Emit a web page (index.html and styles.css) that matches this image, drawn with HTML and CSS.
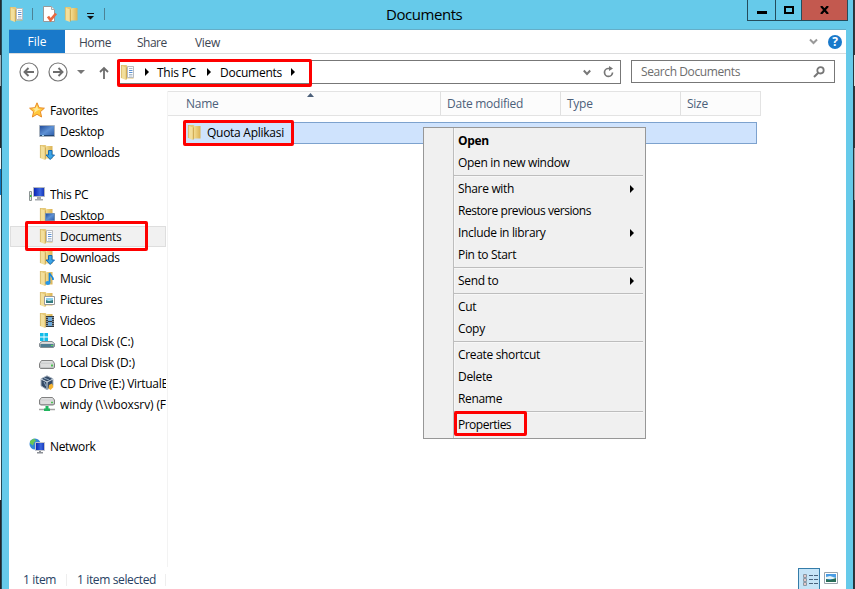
FILE: index.html
```
<!DOCTYPE html>
<html lang="en">
<head>
<meta charset="utf-8">
<title>Documents</title>
<link rel="stylesheet" href="styles.css">
</head>
<body>
<svg class="defs" width="0" height="0">
  <defs>
    <linearGradient id="gold" x1="0" x2="1"><stop offset="0" stop-color="#f3dc90"/><stop offset="1" stop-color="#dab253"/></linearGradient>
    <linearGradient id="screen" x1="0" y1="0" x2="1" y2="1"><stop offset="0" stop-color="#1d4695"/><stop offset=".5" stop-color="#5e91d4"/><stop offset="1" stop-color="#2959a6"/></linearGradient>
    <linearGradient id="pc" x1="0" x2="1"><stop offset="0" stop-color="#0820b0"/><stop offset=".6" stop-color="#3c68e0"/><stop offset="1" stop-color="#1230b4"/></linearGradient>
    <linearGradient id="metal" x1="0" y1="0" x2="0" y2="1"><stop offset="0" stop-color="#e8e8e8"/><stop offset="1" stop-color="#a3a5a8"/></linearGradient>
    <symbol id="folder" viewBox="0 0 16 16">
      <path d="M1 1h5.500l1 1v12.500L1 14z" fill="#e5c878"/>
      <path d="M7 3l1-1h5.500v12.500H7z" fill="url(#gold)"/>
      <path d="M1 1.500l5 2V16l-5-2z" fill="#f3df9b"/><path d="M6.300 3.500V15.500" stroke="#c9a249" stroke-width=".9"/><path d="M1.400 1v13" stroke="#d3b663" stroke-width=".8"/>
    </symbol>
    <symbol id="documents" viewBox="0 0 16 16">
      <use href="#folder"/><path d="M7.500 2.500h6v11h-6z" fill="#fff" stroke="#b9bcc0"/>
      <path d="M9 4.500h3.500M9 10.500h3.500M9 12h3.500" stroke="#a4b4c6" stroke-width=".9"/><path d="M9 6.500h3.500M9 8.500h3.500" stroke="#5d92d3"/>
    </symbol>
    <symbol id="downloads" viewBox="0 0 16 16">
      <use href="#folder"/><path d="M9.500 6.500h3.500V11h2.500l-4.300 4.500L7 11h2.500z" fill="#3aa4e6" stroke="#1769b0"/>
    </symbol>
    <symbol id="music" viewBox="0 0 16 16">
      <use href="#folder"/><path d="M10.500 13V3c.5 3 4 3 3.500 7" fill="none" stroke="#1787dc" stroke-width="1.700"/><ellipse cx="8.800" cy="13" rx="2.500" ry="1.900" fill="#2697e8"/>
    </symbol>
    <symbol id="pictures" viewBox="0 0 16 16">
      <use href="#folder"/><path d="M5.500 5.500h10v8h-10z" fill="#fff" stroke="#9a9a9a"/><path d="M7 7h7v2.500H7z" fill="#8bd0ec"/><path d="M7 9l3 1 4-1v3H7z" fill="#337c80"/>
    </symbol>
    <symbol id="videos" viewBox="0 0 16 16">
      <use href="#folder"/><path d="M7 4h8v11H7z" fill="#303940"/><path d="M9 5h4v4H9zM9 10h4v4H9z" fill="#6ca9db"/><path d="M8 5v9M14 5v9" stroke="#ddd" stroke-dasharray="1 1"/>
    </symbol>
    <symbol id="monitor" viewBox="0 0 16 16">
      <path d="M.5 2.500h15v11H.5z" fill="url(#screen)" stroke="#aab3be"/><path d="M1 12.500h14" stroke="#214776"/><path d="M3 12.500h2" stroke="#9bd1ef"/>
    </symbol>
    <symbol id="folderdesk" viewBox="0 0 16 16">
      <use href="#folder"/><path d="M6.500 6.500h9v7h-9z" fill="url(#screen)" stroke="#718eae"/>
    </symbol>
    <symbol id="star" viewBox="0 0 16 16">
      <path d="M8 .8l2.100 4.900 5.300.5-4 3.500 1.200 5.300L8 12.300 3.400 15l1.200-5.300-4-3.500 5.300-.5z" fill="#ffc83c" stroke="#ea8c28"/><path d="M8 3.500l1 3.200 3 .4-3.500 1.500L5 11l1-3-2.500-1.500 3-.3z" fill="#ffe997"/>
    </symbol>
    <symbol id="thispc" viewBox="0 0 16 16">
      <path d="M.5 5.500h2v9h-2z" fill="#e6e8e8" stroke="#8c9494"/><path d="M1 9h1.500v2H1z" fill="#45bd40"/>
      <path d="M4.500 1.500h11v9h-11z" fill="url(#pc)" stroke="#b4b8bf"/><path d="M8 11h4v2h2v1.500H6V13h2z" fill="#a5a9ad"/>
    </symbol>
    <symbol id="drive" viewBox="0 0 16 16">
      <path d="M2.500 6.500h11l2 3v4l-1 1h-13l-1-1v-4z" fill="url(#metal)" stroke="#808080"/><path d="M1.500 10h13v3.500h-13z" fill="#dcdcdc"/><path d="M12 11.500h2" stroke="#4cc252" stroke-width="1.800"/>
    </symbol>
    <symbol id="driveC" viewBox="0 0 16 16">
      <path d="M3 8.500h10l2.500 2v3l-1 1h-13l-1-1v-3z" fill="url(#metal)" stroke="#858d92"/><path d="M1.500 11h13v3h-13z" fill="#4e7c91"/><path d="M12 12.500h2" stroke="#5ed85a"/>
      <path d="M1 0h3.600v3.600H1zM5.400 0H9v3.600H5.400zM1 4.400h3.600V8H1zM5.400 4.400H9V8H5.400z" fill="#12bce9"/>
    </symbol>
    <symbol id="cd" viewBox="0 0 16 16">
      <path d="M8 .8l6 3v7l-6 4-6-4v-7z" fill="#354b67" stroke="#aab5c2"/><path d="M2 4l6 3 6-3M8 7v7" stroke="#d9e3ec" fill="none"/><path d="M5 7l2 4M5 3l5 2" stroke="#8fa9c3"/><path d="M10 10l3-1.500 1.500 3.500-3 3-2-1.500z" fill="#f6b431"/>
    </symbol>
    <symbol id="netdrive" viewBox="0 0 16 16">
      <path d="M2.500 1.500h11l2 2.500v4l-1 1h-13l-1-1V4z" fill="url(#metal)" stroke="#808080"/><path d="M1.500 4.500h13v3.500h-13z" fill="#dcdcdc"/><path d="M12 6.500h2" stroke="#4cc252" stroke-width="1.500"/><path d="M0 13.500h16" stroke="#a5a5a5" stroke-width="1.500"/><path d="M6.500 10h3v2.500H11V15H5v-2.500h1.500z" fill="#20b55e"/>
    </symbol>
    <symbol id="network" viewBox="0 0 16 16">
      <circle cx="6" cy="6" r="5.500" fill="#3487d8"/><path d="M1 3l4-2.500 2 2-2 2-1 3-3-2zM6 6l3-1v5H6z" fill="#69c755"/>
      <path d="M6.500 4.500h9v8h-9z" fill="url(#pc)" stroke="#c2c5cb"/><path d="M10 13h2v1h2v1.500H8V14h2z" fill="#8c9096"/>
    </symbol>
  </defs>
</svg>
<div class="desktop">
  <div class="edge left"></div>
  <div class="window">
    <header class="titlebar">
      <div class="quick">
        <svg class="i16"><use href="#documents"/></svg><i class="bar"></i>
        <svg class="i16 check" viewBox="0 0 16 16"><path d="M1.500 .5h8l3 3v12h-11z" fill="#fff" stroke="#999"/><path d="M9.500.5v3h3" fill="#eee" stroke="#aaa"/><path d="M6 10.500l2.500 3.500L14 7.500" fill="none" stroke="#e7683f" stroke-width="2.700"/></svg>
        <svg class="i16 newf"><use href="#folder"/></svg>
        <svg class="qa" width="7" height="7" viewBox="0 0 7 7"><path d="M0 .5h7" stroke="#111"/><path d="M0 3h7L3.500 6.500z" fill="#111"/></svg><i class="bar last"></i>
      </div>
      <h1>Documents</h1>
      <div class="controls">
        <span class="min"><svg width="10" height="3"><path d="M0 1.500h10" stroke="#000" stroke-width="3"/></svg></span>
        <span class="max"><svg width="10" height="8"><path d="M1 1h8v6H1z" fill="none" stroke="#000" stroke-width="2"/></svg></span>
        <span class="close"><svg width="9" height="8" viewBox="0 0 9 8"><path d="M1 0l7 8M8 0L1 8" stroke="#000" stroke-width="2.200"/></svg></span>
      </div>
    </header>
    <main class="content">
      <nav class="tabs">
        <span class="file">File</span><span class="tab home">Home</span><span class="tab share">Share</span><span class="tab view">View</span>
        <svg class="chev" width="9" height="7" viewBox="0 0 9 7"><path d="M1 1.500l3.500 3.500L8 1.500" fill="none" stroke="#999" stroke-width="2"/></svg>
        <span class="help">?</span>
      </nav>
      <div class="location">
        <svg class="round" width="20" height="20" viewBox="0 0 20 20"><circle cx="10" cy="10" r="9" fill="#fff" stroke="#777" stroke-width="1.200"/><path d="M15 10H6M9.500 6L5.500 10l4 4" fill="none" stroke="#6d6d6d" stroke-width="1.900"/></svg>
        <svg class="round fwd" width="20" height="20" viewBox="0 0 20 20"><circle cx="10" cy="10" r="9" fill="#fff" stroke="#777" stroke-width="1.200"/><path d="M5 10h9M10.500 6l4 4-4 4" fill="none" stroke="#6d6d6d" stroke-width="1.900"/></svg>
        <svg class="recent" width="8" height="4"><path d="M0 0h8L4 4z" fill="#777"/></svg>
        <svg class="up" width="10" height="13" viewBox="0 0 10 13"><path d="M5 13V2M1 6l4-4 4 4" fill="none" stroke="#6d6d6d" stroke-width="1.800"/></svg>
        <div class="address">
          <svg class="i16"><use href="#documents"/></svg>
          <svg class="tri first" viewBox="0 0 4 8"><path d="M0 0l4 4-4 4z"/></svg><span class="t-pc">This PC</span>
          <svg class="tri" viewBox="0 0 4 8"><path d="M0 0l4 4-4 4z"/></svg><span class="t-docs">Documents</span>
          <svg class="tri" viewBox="0 0 4 8"><path d="M0 0l4 4-4 4z"/></svg>
          <svg class="drop" width="8" height="7" viewBox="0 0 8 7"><path d="M.8 1.500L4 5l3.200-3.500" fill="none" stroke="#777" stroke-width="2"/></svg>
          <svg class="refresh" width="11" height="12" viewBox="0 0 11 12"><path d="M7 2.500H5A4 4 0 1 0 9.500 6.500" fill="none" stroke="#777" stroke-width="1.700"/><path d="M6 0v5l4-2.500z" fill="#777"/></svg>
          <i class="mark"></i>
        </div>
        <div class="search"><span>Search Documents</span><svg width="12" height="12" viewBox="0 0 12 12"><circle cx="7.500" cy="4.300" r="3.200" fill="none" stroke="#777" stroke-width="1.800"/><path d="M5.300 6.700L1 11" stroke="#777" stroke-width="2"/></svg></div>
      </div>
      <div class="panes">
        <aside class="tree">
          <div class="node root"><svg class="i16"><use href="#star"/></svg><span>Favorites</span></div>
          <div class="node"><svg class="i16"><use href="#monitor"/></svg><span>Desktop</span></div>
          <div class="node"><svg class="i16"><use href="#downloads"/></svg><span>Downloads</span></div>
          <div class="node root gap"><svg class="i16"><use href="#thispc"/></svg><span>This PC</span></div>
          <div class="node"><svg class="i16"><use href="#folderdesk"/></svg><span>Desktop</span></div>
          <div class="node selected"><svg class="i16"><use href="#documents"/></svg><span>Documents</span><i class="mark"></i></div>
          <div class="node"><svg class="i16"><use href="#downloads"/></svg><span>Downloads</span></div>
          <div class="node"><svg class="i16"><use href="#music"/></svg><span>Music</span></div>
          <div class="node"><svg class="i16"><use href="#pictures"/></svg><span>Pictures</span></div>
          <div class="node"><svg class="i16"><use href="#videos"/></svg><span>Videos</span></div>
          <div class="node"><svg class="i16"><use href="#driveC"/></svg><span class="wide">Local Disk (C:)</span></div>
          <div class="node"><svg class="i16"><use href="#drive"/></svg><span class="wide">Local Disk (D:)</span></div>
          <div class="node"><svg class="i16"><use href="#cd"/></svg><span>CD Drive (E:) VirtualB</span></div>
          <div class="node"><svg class="i16"><use href="#netdrive"/></svg><span class="share-name">windy (\\vboxsrv) (F</span></div>
          <div class="node root gap"><svg class="i16"><use href="#network"/></svg><span>Network</span></div>
        </aside>
        <section class="files">
          <div class="columns"><span class="name">Name<svg class="sort" width="7" height="4"><path d="M3.500 0L7 4H0z" fill="#4c607a"/></svg></span><span>Date modified</span><span>Type</span><span>Size</span></div>
          <div class="row"><svg class="i16"><use href="#folder"/></svg><span>Quota Aplikasi</span><i class="mark"></i></div>
        </section>
      </div>
      <footer class="status">
        <span class="count">1 item</span><span class="chosen">1 item selected</span>
        <div class="views">
          <span class="details"><svg width="16" height="14" viewBox="0 0 16 14"><path d="M1.500 1.500h3v3h-3zM1.500 5.500h3v3h-3zM1.500 9.500h3v3h-3z" fill="#fff" stroke="#8b98a5"/><path d="M2.500 3h1M2.500 7h1M2.500 11h1" stroke="#8a2020"/><path d="M7 2.500h4M12 2.500h4M7 6.500h4M12 6.500h4M7 10.500h4M12 10.500h4" stroke="#49637d"/></svg></span>
          <svg class="thumbs" width="14" height="12" viewBox="0 0 14 12"><path d="M.5.5h13v11H.5z" fill="#fff" stroke="#98a3ac"/><path d="M2 2h10v8H2z" fill="#4a9de5"/><path d="M2 5l4-1 6 2v1H2z" fill="#e8f5f5"/><path d="M2 7l4 1 6-2v4H2z" fill="#286d58"/></svg>
        </div>
      </footer>
    </main>
  </div>
  <div class="edge right"></div>
</div>
<div class="menu">
  <div class="item bold">Open</div><div class="item">Open in new window</div><hr>
  <div class="item sub">Share with<svg class="tri" viewBox="0 0 4 8"><path d="M0 0l4 4-4 4z"/></svg></div>
  <div class="item restore">Restore previous versions</div>
  <div class="item sub">Include in library<svg class="tri" viewBox="0 0 4 8"><path d="M0 0l4 4-4 4z"/></svg></div>
  <div class="item">Pin to Start</div><hr>
  <div class="item sub">Send to<svg class="tri" viewBox="0 0 4 8"><path d="M0 0l4 4-4 4z"/></svg></div><hr>
  <div class="item">Cut</div><div class="item">Copy</div><hr>
  <div class="item">Create shortcut</div><div class="item">Delete</div><div class="item">Rename</div><hr>
  <div class="item props">Properties<i class="mark"></i></div>
</div>
</body>
</html>
```
FILE: styles.css
```
* { box-sizing: border-box; }
body { margin: 0; width: 855px; height: 589px; overflow: hidden; font: 12px/20px "Open Sans", "Noto Sans", sans-serif; letter-spacing: -.33px; color: #000; }
svg { display: block; flex: none; }
.defs { position: absolute; }
.i16 { width: 16px; height: 16px; }
.desktop { display: flex; height: 589px; }
.edge { width: 2px; flex: none; background: linear-gradient(#252b30 0 55px, #9fb0b8 55px 86px, #24272b 86px 148px, #f7f9fa 148px 169px, #0879c9 169px 195px, #f7f9fa 195px 500px, #262326 500px); border-right: 1px solid #244a59; }
.edge.right { border-right: 0; border-left: 1px solid #24343d; background: linear-gradient(#33383b 0 55px, #ddd 55px 86px, #343638 86px 148px, #9ba1a3 148px 200px, #313539 200px); }
.window { width: 851px; padding: 0 7px; background: #66caea; display: flex; flex-direction: column; }
.titlebar { height: 30px; flex: none; display: flex; position: relative; border-bottom: 1px solid #64aec8; }
.titlebar h1 { flex: 1; margin: 0; font-size: 15px; line-height: 28px; font-weight: 400; letter-spacing: -.45px; padding-left: 260px; }
.quick { display: flex; width: 117px; padding-top: 6px; }
.quick .bar { width: 1px; height: 12px; margin: 2px 9px 0 7px; background: #4d8295; }
.quick .newf { margin-left: 6px; }
.quick .qa { margin: 7px 0 0 7px; }
.quick .last { margin-left: 10px; }
.controls { display: flex; height: 21px; border: 1px solid #244c5c; border-top: 0; margin-right: -2px; }
.controls span { display: flex; justify-content: center; align-items: center; width: 28px; border-right: 1px solid #244c5c; }
.controls .min { padding-top: 5px; }
.controls .max { width: 26px; }
.controls .close { width: 45px; background: #c3594f; border: 0; }
.content { height: 559px; background: #fff; display: flex; flex-direction: column; }
.tabs { height: 24px; display: flex; align-items: center; border-bottom: 1px solid #dbdcdd; color: #3d4653; flex: none; }
.file { width: 56px; height: 23px; background: #1979ca; color: #fff; text-align: center; line-height: 24px; letter-spacing: 0; }
.tab { width: 58px; padding: 2px 0 0 14px; line-height: 26px; }
.tab.home { letter-spacing: -.5px; }
.tab.share { letter-spacing: -.5px; }
.chev { margin: 0 0 0 auto; }
.help { width: 14px; height: 14px; border-radius: 50%; background: #1979ca; color: #fff; font: bold 12px/14px "Open Sans", sans-serif; text-align: center; margin: 0 4px 0 10px; }
.location { height: 37px; flex: none; display: flex; align-items: flex-start; padding: 8px 0 0 10px; }
.round.fwd { margin-left: 9px; }
.recent { margin: 8px 0 0 9px; }
.up { margin: 4px 8px 0 14px; }
.address { position: relative; width: 504px; height: 24px; border: 1px solid #777; margin-top: -2px; display: flex; align-items: center; padding-left: 2px; }
.address span { padding-top: 1px; letter-spacing: -.25px; }
.tri { width: 4px; height: 8px; }
.address .tri { margin: 0 8px; }
.address .tri.first { margin-left: 9px; }
.address .t-pc { width: 42px; }
.address .t-docs { width: 64px; padding-left: 1px; }
.drop { margin-left: auto; margin-right: 12px; }
.refresh { margin-right: 6px; }
.search { width: 204px; height: 23px; border: 1px solid #777; margin: -2px 0 0 10px; display: flex; align-items: center; justify-content: space-between; padding: 0 9px; color: #6d6d6d; letter-spacing: -.4px; }
.search span { padding-top: 1px; }
.mark { position: absolute; border: 3px solid #fe0000; border-radius: 2px; }
.address .mark { left: -1px; top: -2px; width: 195px; height: 28px; }
.panes { flex: 1; min-height: 0; display: flex; }
.tree { width: 159px; border-right: 1px solid #f3f3f3; padding: 9px 1px 0 1px; }
.node { position: relative; height: 21px; display: flex; align-items: center; padding: 0 0 1px 29px; gap: 5px; white-space: nowrap; }
.node span { flex: 1; min-width: 0; overflow: hidden; line-height: 20px; margin-top: 2px; }
.node .wide { letter-spacing: -.2px; }
.node .share-name { letter-spacing: -.12px; }
.node.root { padding-left: 19px; }
.node.gap { margin-top: 21px; }
.node.selected { background: #f1f1f1; border: 1px solid #dedede; padding: 0 0 0 28px; }
.node.selected span { margin-top: 1px; }
.node.selected .i16 { margin-top: -1px; }
.node .mark { left: 14px; top: -6px; width: 123px; height: 30px; z-index: 2; }
.files { flex: 1; }
.columns { width: 593px; height: 25px; border: 1px solid #e3e3e3; border-left: 0; background: #fcfcfc; display: flex; color: #4c607a; line-height: 24px; letter-spacing: -.25px; }
.columns span { flex: none; width: 120px; padding-left: 6px; border-right: 1px solid #e0e0e0; }
.columns .name { width: 273px; padding-left: 18px; position: relative; }
.columns span:last-child { width: 79px; border: 0; }
.sort { position: absolute; left: 139px; top: 1px; }
.row { position: relative; width: 573px; height: 22px; margin: 6px 0 0 16px; border: 1px solid #7da2ce; background: #cfe3fd; display: flex; align-items: center; padding-left: 2px; gap: 4px; letter-spacing: -.27px; }
.row .i16 { margin-top: -2px; }
.row .mark { left: -2px; top: -3px; width: 111px; height: 26px; }
.status { height: 22px; flex: none; display: flex; align-items: center; color: #274163; padding-left: 14px; position: relative; }
.status > span { margin-top: 4px; }
.status .count { width: 44px; border-right: 1px solid #eee; line-height: 12px; }
.status .chosen { width: 99px; padding-left: 10px; border-right: 1px solid #eee; line-height: 12px; letter-spacing: -.37px; }
.views { margin-left: auto; display: flex; align-items: center; gap: 4px; padding-right: 8px; height: 22px; }
.details { width: 22px; height: 21px; margin-top: 1px; background: #c6e4f7; border: 1px solid #347ca9; border-bottom: 0; padding: 4px 3px; }
.menu { position: absolute; left: 423px; top: 127px; width: 223px; height: 312px; padding: 2px; background: linear-gradient(90deg, #f0f0f0 29px, #bdbdbd 29px 30px, #f7f7f7 30px 31px, #f0f0f0 31px); border: 1px solid #979797; }
.item { position: relative; height: 22px; line-height: 22px; padding-left: 32px; white-space: nowrap; }
.item.restore { letter-spacing: -.45px; }
.bold { font-weight: 700; }
.sub { display: flex; justify-content: space-between; align-items: center; padding-right: 9px; }
.menu hr { height: 4px; margin: 0 0 0 28px; border: 0; background: linear-gradient(#f0f0f0 1px, #bdbdbd 1px 2px, #f7f7f7 2px 3px, #f0f0f0 3px); }
.props { letter-spacing: -.5px; }
.props .mark { left: 28px; top: -3px; width: 73px; height: 25px; }
```
